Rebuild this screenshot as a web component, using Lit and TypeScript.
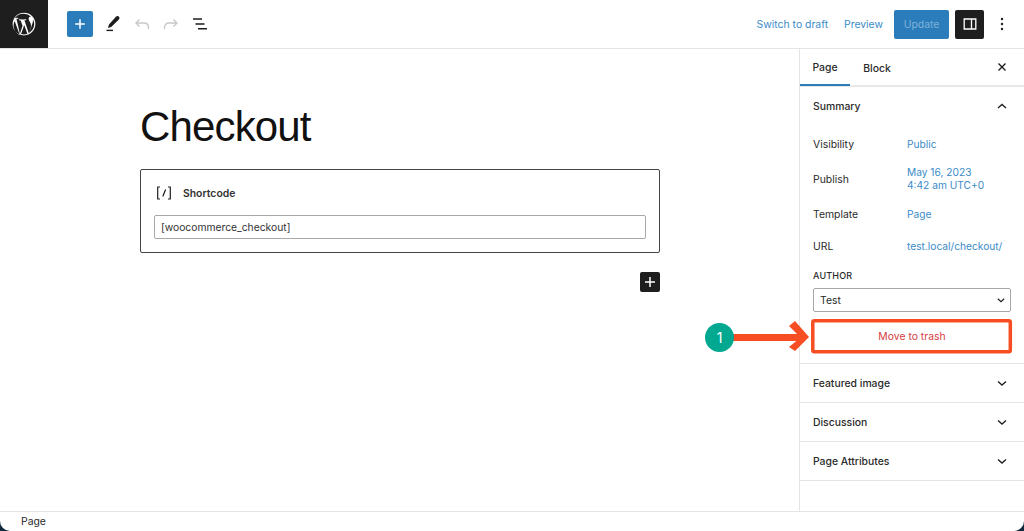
import { LitElement, html, css } from "lit";
import { customElement } from "lit/decorators.js";

const chevDown = html`<svg class="chev" width="24" height="24" viewBox="0 0 24 24"><path d="M8 10.500l4 3.600 4-3.600" fill="none" stroke="#1e1e1e" stroke-width="1.300"/></svg>`;
const chevUp = html`<svg class="chev" width="24" height="24" viewBox="0 0 24 24"><path d="M8 14l4-3.600 4 3.600" fill="none" stroke="#1e1e1e" stroke-width="1.300"/></svg>`;
const chevSmall = html`<svg width="14" height="14" viewBox="0 0 14 14"><path d="M3.800 5.800L7 8.600l3.200-2.800" fill="none" stroke="#1e1e1e" stroke-width="1.200"/></svg>`;

@customElement("app-root")
export class AppRoot extends LitElement {
  static styles = css`
    :host { display: block; width: 1024px; height: 531px; overflow: hidden; position: relative; background: #fff; font-family: Inter, "Liberation Sans", sans-serif; font-size: 10.4px; color: #2a2a2a; }
    * { box-sizing: border-box; }
    .frame { display: flex; flex-direction: column; height: 531px; }
    .top { height: 49px; flex: none; display: flex; align-items: center; border-bottom: 1px solid #e4e4e4; }
    .wp { width: 48px; height: 48px; background: #1e1e1e; display: flex; align-items: center; justify-content: center; }
    .add { margin-left: 19px; width: 26px; height: 26px; border-radius: 2px; background: #2a7cbb; display: flex; align-items: center; justify-content: center; }
    .tools { display: flex; align-items: center; gap: 5px; margin-left: 8px; }
    .tools svg { display: block; }
    .right { margin-left: auto; display: flex; align-items: center; }
    .link { color: #3a8bc8; }
    .link.preview { margin-left: 16px; }
    .update { margin-left: 11px; width: 55px; height: 29px; border-radius: 2px; background: #2a7cbb; color: #7fb2d9; display: flex; align-items: center; justify-content: center; }
    .toggle { margin-left: 6px; width: 29px; height: 29px; border-radius: 2px; background: #1e1e1e; display: flex; align-items: center; justify-content: center; }
    .more { margin-left: 6px; margin-right: 10px; width: 24px; height: 24px; display: block; }
    .main { flex: 1; display: flex; min-height: 0; }
    .canvas { flex: 1; min-width: 0; padding: 51px 0 0 140px; }
    .title { margin: 0; font-family: "Liberation Sans", Arial, sans-serif; font-size: 42px; font-weight: 400; line-height: 54px; letter-spacing: -0.85px; color: #111; }
    .block { width: 520px; height: 84px; margin-top: 15px; border: 1px solid #444; border-radius: 2px; padding: 12px 13px 0; }
    .blockhead { display: flex; align-items: center; gap: 10px; height: 22px; font-weight: 600; color: #333; }
    .blockhead svg { margin-left: 1px; }
    .input { margin-top: 11px; height: 24px; border: 1px solid #a8a8a8; border-radius: 2px; padding: 0 6px; display: flex; align-items: center; font-size: 10.3px; width: 492px; color: #333; }
    .appender { width: 20px; height: 20px; margin: 19px 0 0 500px; border-radius: 2px; background: #1e1e1e; display: flex; align-items: center; justify-content: center; }
    .side { width: 225px; flex: none; border-left: 1px solid #e4e4e4; display: flex; flex-direction: column; }
    .tabs { height: 38px; display: flex; align-items: center; border-bottom: 2px solid #e8e8e8; flex: none; font-weight: 500; }
    .tab { width: 50px; height: 38px; padding-top: 2px; display: flex; align-items: center; justify-content: center; }
    .tab.on { border-bottom: 2px solid #2a7cbb; }
    .tab.block2 { width: 54px; }
    .close { margin-left: auto; margin-right: 13px; display: block; }
    .panel { border-bottom: 1px solid #e4e4e4; flex: none; }
    .phead { height: 38px; display: flex; align-items: center; justify-content: space-between; padding: 0 10px 0 13px; font-weight: 500; }
    .summary { height: 277px; }
    .summary .phead { height: 38px; }
    .row { display: flex; align-items: center; padding-left: 13px; }
    .row .k { width: 94px; flex: none; }
    .row .v { color: #3a8bc8; line-height: 13px; font-size: 10.2px; }
    .r1 { height: 32px; margin-top: 3px; }
    .r2 { height: 38px; }
    .r3 { height: 32px; }
    .r4 { height: 33px; }
    .author { padding: 0 13px; margin-top: 7px; }
    .author .lab { font-size: 9px; font-weight: 500; line-height: 12px; letter-spacing: 0.2px; }
    .sel { margin-top: 6px; height: 24px; width: 198px; border: 1px solid #a8a8a8; border-radius: 2px; display: flex; align-items: center; justify-content: space-between; padding: 0 2px 0 6px; }
    .trash { margin: 10px 0 0 13px; width: 198px; height: 28px; display: flex; align-items: center; justify-content: center; color: #d63d3f; }
    .status { height: 20px; flex: none; border-top: 1px solid #e4e4e4; padding-left: 21px; display: flex; align-items: center; }
    .callout { position: absolute; left: 705px; top: 319px; pointer-events: none; }
    .num { position: absolute; left: 705px; top: 323px; width: 29px; height: 29px; border-radius: 50%; background: #02a88f; color: #fff; font-size: 14px; display: flex; align-items: center; justify-content: center; }
    .corner { position: absolute; bottom: 0; display: block; }
    .corner.l { left: 0; }
    .corner.r { right: 0; }
  `;

  render() {
    return html`
      <div class="frame">
        <div class="top">
          <div class="wp">
            <svg width="26" height="26" viewBox="0 0 24 24"><path fill="#fff" d="M12 1.500A10.500 10.500 0 1 0 22.500 12 10.500 10.500 0 0 0 12 1.500zm0 1a9.460 9.460 0 0 1 6.400 2.500 2.200 2.200 0 0 0-2.150 2.250c0 1.050.6 1.930 1.250 2.980a6.400 6.400 0 0 1 1 3.300 15 15 0 0 1-.85 3.570l-1.130 3.760-4.080-12.130s.7-.04 1.320-.11c.62-.07.55-.98-.07-.95a30 30 0 0 1-3.060.13 30 30 0 0 1-2.900-.13c-.62-.03-.7.91-.07.95l1.250.11 1.760 4.820-2.470 7.410L5.100 7.350s.68-.04 1.300-.11.55-.98-.07-.95a33 33 0 0 1-2.760.1A9.500 9.500 0 0 1 12 2.500zM3.370 9.200l4.740 13A9.500 9.500 0 0 1 3.370 9.200zM12.200 13l2.900 7.950.07.13a9.500 9.500 0 0 1-5.830.15zm8.060-5.320A9.500 9.500 0 0 1 16.700 20.300l2.900-8.370a9 9 0 0 0 .72-3.400 7 7 0 0 0-.06-.85z"/></svg>
          </div>
          <div class="add"><svg width="14" height="14" viewBox="0 0 14 14"><path d="M7 2.200v9.600M2.200 7h9.600" stroke="#fff" stroke-width="1.500"/></svg></div>
          <div class="tools">
            <svg width="24" height="24" viewBox="0 0 24 24"><path fill="#1e1e1e" d="M17.900 4.600a2 2 0 0 0-2.800 0l-7.100 8-1.100 3.300 3.300-1 7.700-7.500a2 2 0 0 0 0-2.800z"/><rect x="5.500" y="17.700" width="6.500" height="1.400" fill="#1e1e1e"/></svg>
            <svg width="24" height="24" viewBox="0 0 24 24"><path d="M9.500 7.500L6 11l3.500 3.500M6 11h8c2.600 0 4.500 1.600 4.500 4.500V17" fill="none" stroke="#c8c8c8" stroke-width="1.400"/></svg>
            <svg width="24" height="24" viewBox="0 0 24 24"><path d="M14.500 7.500L18 11l-3.500 3.500M18 11h-8c-2.600 0-4.500 1.600-4.500 4.500V17" fill="none" stroke="#c8c8c8" stroke-width="1.400"/></svg>
            <svg width="24" height="24" viewBox="0 0 24 24"><path d="M5 7h9M7.500 12h9M10 16.700h9" fill="none" stroke="#1e1e1e" stroke-width="1.500"/></svg>
          </div>
          <div class="right">
            <span class="link">Switch to draft</span>
            <span class="link preview">Preview</span>
            <div class="update">Update</div>
            <div class="toggle"><svg width="14" height="14" viewBox="0 0 14 14"><path d="M1.200 2h11.600v10H1.200zM8.500 2v10" fill="none" stroke="#fff" stroke-width="1.300"/></svg></div>
            <svg class="more" viewBox="0 0 24 24"><circle cx="12" cy="7" r="1.200" fill="#1e1e1e"/><circle cx="12" cy="12" r="1.200" fill="#1e1e1e"/><circle cx="12" cy="17" r="1.200" fill="#1e1e1e"/></svg>
          </div>
        </div>
        <div class="main">
          <div class="canvas">
            <h1 class="title">Checkout</h1>
            <div class="block">
              <div class="blockhead">
                <svg width="18" height="18" viewBox="0 0 18 18"><path d="M5 3H2.700v12H5M13 3h2.300v12H13M10.600 5.500L7.800 12.500" fill="none" stroke="#1e1e1e" stroke-width="1.200"/></svg>
                <span>Shortcode</span>
              </div>
              <div class="input">[woocommerce_checkout]</div>
            </div>
            <div class="appender"><svg width="14" height="14" viewBox="0 0 14 14"><path d="M7 2v10M2 7h10" stroke="#fff" stroke-width="1.500"/></svg></div>
          </div>
          <div class="side">
            <div class="tabs">
              <div class="tab on">Page</div>
              <div class="tab block2">Block</div>
              <svg class="close" width="18" height="18" viewBox="0 0 18 18"><path d="M5.500 5.500l7 7M12.500 5.500l-7 7" stroke="#1e1e1e" stroke-width="1.400"/></svg>
            </div>
            <div class="panel summary">
              <div class="phead"><span>Summary</span>${chevUp}</div>
              <div class="row r1"><span class="k">Visibility</span><span class="v">Public</span></div>
              <div class="row r2"><span class="k">Publish</span><span class="v">May 16, 2023<br />4:42 am UTC+0</span></div>
              <div class="row r3"><span class="k">Template</span><span class="v">Page</span></div>
              <div class="row r4"><span class="k">URL</span><span class="v">test.local/checkout/</span></div>
              <div class="author">
                <div class="lab">AUTHOR</div>
                <div class="sel"><span>Test</span>${chevSmall}</div>
              </div>
              <div class="trash">Move to trash</div>
            </div>
            <div class="panel"><div class="phead"><span>Featured image</span>${chevDown}</div></div>
            <div class="panel"><div class="phead"><span>Discussion</span>${chevDown}</div></div>
            <div class="panel"><div class="phead"><span>Page Attributes</span>${chevDown}</div></div>
          </div>
        </div>
        <div class="status">Page</div>
      </div>
      <svg class="callout" viewBox="0 0 310 36" width="310" height="36">
        <rect x="107.800" y="1.800" width="197.500" height="31" rx="1.500" fill="none" stroke="#f64e22" stroke-width="3.500"/>
        <rect x="27" y="15" width="66" height="7" fill="#f64e22"/>
        <path d="M84 7l6-5 14 16-14 14-6-4 8-6.500V15z" fill="#f64e22"/>
      </svg>
      <div class="num">1</div>
      <svg class="corner l" width="10" height="10" viewBox="0 0 10 10"><path d="M0 0A10 10 0 0 0 10 10H0z" fill="#0f2a3f"/></svg>
      <svg class="corner r" width="10" height="10" viewBox="0 0 10 10"><path d="M10 0A10 10 0 0 1 0 10H10z" fill="#0f2a3f"/></svg>
    `;
  }
}
